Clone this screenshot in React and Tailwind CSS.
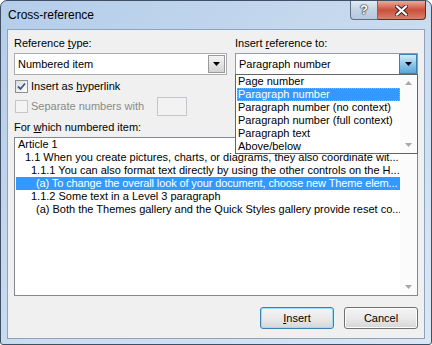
import React from 'react';

const rows = [
  { text: 'Article 1', pad: 'pl-[2px]' },
  { text: '1.1 When you create pictures, charts, or diagrams, they also coordinate wit...', pad: 'pl-[9px]' },
  { text: '1.1.1 You can also format text directly by using the other controls on the H...', pad: 'pl-[15px]' },
  { text: '(a) To change the overall look of your document, choose new Theme elem...', pad: 'pl-[20px] tracking-[-0.12px]', sel: true },
  { text: '1.1.2 Some text in a Level 3 paragraph', pad: 'pl-[15px]' },
  { text: '(a) Both the Themes gallery and the Quick Styles gallery provide reset co...', pad: 'pl-[20px]' },
];

const options = [
  'Page number',
  'Paragraph number',
  'Paragraph number (no context)',
  'Paragraph number (full context)',
  'Paragraph text',
  'Above/below',
];

function Arrow({ up, color = '#000' }) {
  return (
    <svg width="7" height="4" viewBox="0 0 7 4">
      <path d={up ? 'M0 4L3.5 0L7 4Z' : 'M0 0L7 0L3.5 4Z'} fill={color} />
    </svg>
  );
}

function Check({ checked, disabled }) {
  return (
    <span
      className={
        'w-[13px] h-[13px] shrink-0 border flex items-center justify-center ' +
        (disabled
          ? 'border-[#c6c6c6] bg-[#f4f4f4]'
          : 'border-[#8e8f8f] bg-linear-to-br from-[#dcdcdc] to-[#ffffff]')
      }
    >
      {checked && (
        <svg width="9" height="9" viewBox="0 0 9 9">
          <path d="M1 4.5L3.5 7L8 1.5" stroke="#3c5a8c" strokeWidth="1.8" fill="none" />
        </svg>
      )}
    </span>
  );
}

function Scrollbar() {
  return (
    <div className="w-[17px] shrink-0 flex flex-col items-center justify-between py-[6px] bg-[#fbfbfb]">
      <Arrow up color="#a8a8a8" />
      <Arrow color="#a8a8a8" />
    </div>
  );
}

export default function App() {
  return (
    <div className="w-[432px] h-[345px] rounded-t-[7px] rounded-b-[3px] border border-[#3f4f66] bg-linear-to-br from-[#b4cde9] via-[#c9dbef] to-[#dbe7f4] font-['Liberation_Sans',Arial,sans-serif] text-[11px] text-black overflow-hidden">
      <div className="h-[28px] flex items-start">
        <div className="pl-[7px] pt-[7px] text-[12px] leading-[15px] flex-1">Cross-reference</div>
        <div className="flex mr-[5px]">
          <div className="w-[28px] h-[19px] border border-t-0 border-[#5d6f88] rounded-bl-[4px] bg-linear-to-b from-[#e2ebf5] via-[#c4d3e4] to-[#b7c9de] flex items-center justify-center text-white font-bold text-[13px] [text-shadow:0_0_1px_#1d2a3c,0_0_1px_#1d2a3c,0_0_2px_#1d2a3c]">
            ?
          </div>
          <div className="w-[48px] h-[19px] border border-t-0 border-l-0 border-[#4e3434] rounded-br-[4px] bg-linear-to-b from-[#e8aa9c] via-[#c84f3a] to-[#d9806a] flex items-center justify-center">
            <svg width="13" height="11" viewBox="0 0 13 11">
              <path d="M2 1.5L11 9.5M11 1.5L2 9.5" stroke="#3a2222" strokeWidth="4" strokeLinecap="square" />
              <path d="M2 1.5L11 9.5M11 1.5L2 9.5" stroke="#ffffff" strokeWidth="2.2" strokeLinecap="square" />
            </svg>
          </div>
        </div>
      </div>

      <div className="ml-[6px] w-[418px] h-[310px] border border-[#8ea3bd] bg-[#f0f0f0] px-[6px] pt-[6px] flex flex-col">
        <div className="flex gap-[8px]">
          <div className="w-[213px] flex flex-col">
            <div className="leading-[15px]">
              Reference <span className="underline">t</span>ype:
            </div>
            <div className="mt-[2px] h-[22px] border border-[#abadb3] bg-white flex">
              <div className="flex-1 pl-[3px] leading-[20px]">Numbered item</div>
              <div className="w-[17px] m-[1px] border border-[#9a9a9a] bg-linear-to-b from-[#f4f4f4] to-[#d4d4d4] flex items-center justify-center">
                <Arrow />
              </div>
            </div>
            <div className="mt-[4px] h-[15px] flex items-center gap-[3px] pl-[1px]">
              <Check checked />
              <span>
                Insert as <span className="underline">h</span>yperlink
              </span>
            </div>
            <div className="mt-[3px] h-[19px] flex items-center gap-[3px] pl-[1px]">
              <Check disabled />
              <span className="w-[123px] text-[#8a8a8a]">Separate numbers with</span>
              <span className="w-[30px] h-[19px] border border-[#c3c7cc] bg-[#f2f2f2]" />
            </div>
          </div>
          <div className="flex-1 flex flex-col">
            <div className="leading-[15px]">
              Insert <span className="underline">r</span>eference to:
            </div>
            <div className="relative mt-[2px] h-[22px] border border-[#8d9bb0] bg-white flex">
              <div className="flex-1 pl-[3px] leading-[20px]">Paragraph number</div>
              <div className="w-[18px] border border-[#3c7fb1] bg-linear-to-b from-[#d2ecfa] via-[#8ec8ec] to-[#5ba6d8] flex items-center justify-center">
                <Arrow />
              </div>
              <div className="absolute z-10 left-[-1px] right-[-1px] top-[20px] h-[80px] border border-[#646464] bg-white flex">
                <div className="flex-1">
                  {options.map((o, i) => (
                    <div
                      key={o}
                      className={
                        'h-[13px] leading-[13px] pl-[1px] ml-[1px] whitespace-nowrap ' +
                        (i === 1 ? 'bg-[#3399ff] text-white outline outline-dotted outline-[#f2a046] -outline-offset-1' : '')
                      }
                    >
                      {o}
                    </div>
                  ))}
                </div>
                <Scrollbar />
              </div>
            </div>
          </div>
        </div>

        <div className="mt-[4px] leading-[15px]">
          For <span className="underline">w</span>hich numbered item:
        </div>
        <div className="mt-[2px] h-[159px] border border-[#828790] bg-white flex">
          <div className="flex-1 min-w-0">
            {rows.map((r) => (
              <div
                key={r.text}
                className={
                  'h-[13px] leading-[13px] ml-[1px] whitespace-nowrap overflow-hidden ' +
                  r.pad +
                  (r.sel ? ' bg-[#3399ff] text-white' : '')
                }
              >
                {r.text}
              </div>
            ))}
          </div>
          <Scrollbar />
        </div>

        <div className="mt-[11px] flex justify-end gap-[10px]">
          <button className="w-[74px] h-[22px] rounded-[3px] border border-[#3c7fb1] bg-linear-to-b from-[#f4f4f4] via-[#eaeaea] to-[#d6d6d6] shadow-[inset_0_0_0_1px_#9fdcf7] leading-[20px]">
            <span className="underline">I</span>nsert
          </button>
          <button className="w-[74px] h-[22px] rounded-[3px] border border-[#707070] bg-linear-to-b from-[#f4f4f4] via-[#eaeaea] to-[#d6d6d6] shadow-[inset_0_0_0_1px_#fcfcfc] leading-[20px]">
            Cancel
          </button>
        </div>
      </div>
    </div>
  );
}
